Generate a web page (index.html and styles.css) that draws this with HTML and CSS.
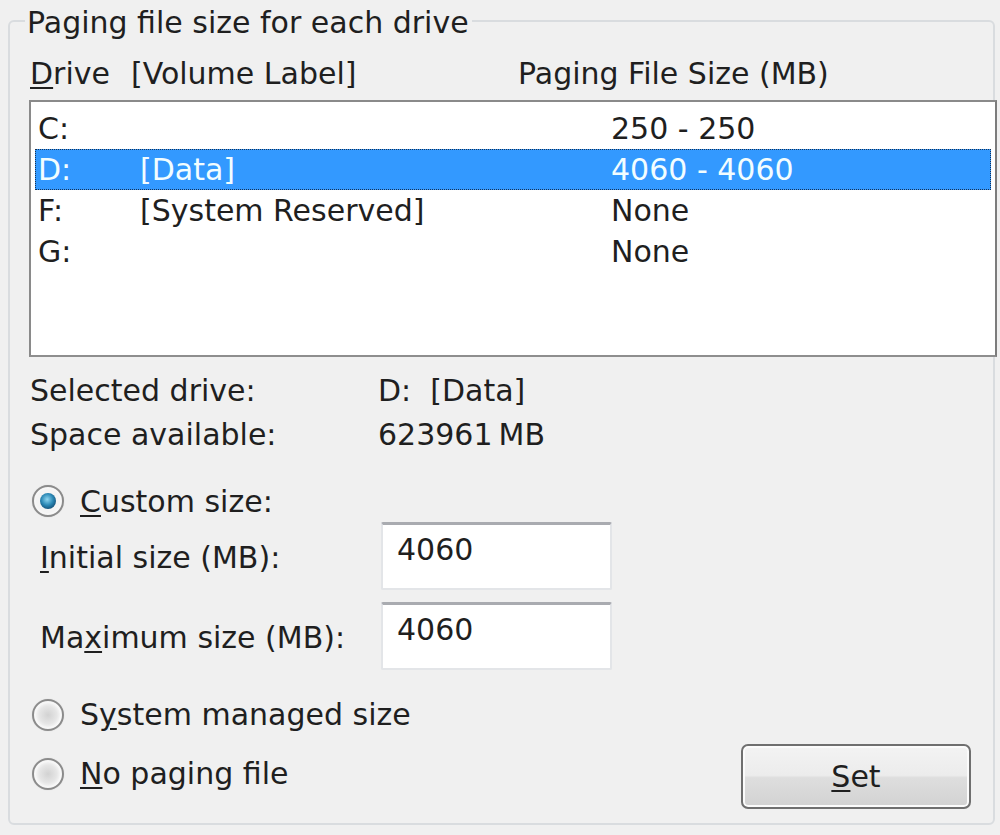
FILE: index.html
```html
<!DOCTYPE html>
<html>
<head>
<meta charset="utf-8">
<link rel="stylesheet" href="styles.css">
</head>
<body>
<fieldset class="group">
  <legend class="group-title">Paging file size for each drive</legend>
  <div class="col-head">
    <span class="ch-drive"><u>D</u>rive</span>
    <span class="ch-label">[Volume Label]</span>
    <span class="ch-size">Paging File Size (MB)</span>
  </div>
  <div class="listbox">
    <div class="row"><span class="r-drive">C:</span><span class="r-label"></span><span class="r-size">250 - 250</span></div>
    <div class="row sel"><span class="r-drive">D:</span><span class="r-label">[Data]</span><span class="r-size">4060 - 4060</span></div>
    <div class="row"><span class="r-drive">F:</span><span class="r-label">[System Reserved]</span><span class="r-size">None</span></div>
    <div class="row"><span class="r-drive">G:</span><span class="r-label"></span><span class="r-size">None</span></div>
  </div>
  <div class="info">
    <span class="info-k">Selected drive:</span><span class="info-v">D:&nbsp;&nbsp;[Data]</span>
    <span class="info-k">Space available:</span><span class="info-v">623961&#8201;MB</span>
  </div>
  <div class="radio-row custom">
    <span class="radio on"></span><span class="radio-text"><u>C</u>ustom size:</span>
  </div>
  <div class="fields">
    <div class="field"><span class="field-label"><u>I</u>nitial size (MB):</span><div class="textbox">4060</div></div>
    <div class="field"><span class="field-label">Ma<u>x</u>imum size (MB):</span><div class="textbox">4060</div></div>
  </div>
  <div class="bottom">
    <div class="radios">
      <div class="radio-row"><span class="radio"></span><span class="radio-text">S<u>y</u>stem managed size</span></div>
      <div class="radio-row"><span class="radio"></span><span class="radio-text"><u>N</u>o paging file</span></div>
    </div>
    <button class="btn" type="button"><u>S</u>et</button>
  </div>
</fieldset>
</body>
</html>
```
FILE: styles.css
```css
html, body {
  margin: 0;
  padding: 0;
  background: #f0f0f0;
}
body {
  width: 1000px;
  height: 835px;
  overflow: hidden;
  font-family: "DejaVu Sans", sans-serif;
  font-size: 30px;
  color: #1f1f1f;
}
u {
  text-decoration-thickness: 2px;
  text-underline-offset: 3px;
}
.group {
  margin: 2px 5px 0 8px;
  border: 2px solid #d9dcdf;
  border-radius: 6px;
  padding: 0 0 14px 19px;
  min-inline-size: 0;
}
.group-title {
  margin-left: -4px;
  padding: 4px 3px 0 2px;
  line-height: 34px;
}
.col-head {
  display: flex;
  margin-top: 17px;
  padding-left: 1px;
  line-height: 34px;
  white-space: nowrap;
}
.ch-drive { width: 101px; }
.ch-label { width: 387px; }
.listbox {
  margin-top: 9px;
  margin-right: -4px;
  height: 247px;
  background: #fff;
  border: 2px solid #8a8a8a;
  border-right-color: #7c7c7c;
  border-bottom-color: #8e8e8e;
  padding: 6px 4px 0 4px;
}
.row {
  display: flex;
  height: 41px;
  line-height: 41px;
  padding-left: 3px;
  white-space: nowrap;
}
.row.sel {
  background: #3399ff;
  color: #f2fdff;
  outline: 1px dotted #173152;
  outline-offset: -1px;
}
.r-drive { width: 102px; }
.r-label { width: 471px; }
.info {
  display: grid;
  grid-template-columns: 348px auto;
  margin-top: 12px;
  padding-left: 1px;
  line-height: 44px;
}
.radio-row {
  display: flex;
  align-items: center;
  height: 59px;
  padding-left: 3px;
  white-space: nowrap;
}
.radio-row.custom {
  height: 36px;
  margin-top: 26px;
}
.radio-text { margin-left: 16px; }
.radio {
  position: relative;
  flex: none;
  width: 28px;
  height: 28px;
  border-radius: 50%;
  border: 2px solid #8b8b8b;
  background: radial-gradient(circle at 50% 50%, #d2d2d2 0, #e6e6e6 45%, #fbfbfb 70%, #f4f4f4 100%);
  box-shadow: inset 0 0 0 2px #f7f7f7, 0 0 1px #c8c8c8;
}
.radio.on {
  background: #f4f4f4;
}
.radio.on::after {
  content: "";
  position: absolute;
  left: 6px;
  top: 6px;
  width: 16px;
  height: 16px;
  border-radius: 50%;
  background: radial-gradient(circle at 45% 40%, #8fd6f0 0, #2b88b5 45%, #124b72 80%, #0c3456 100%);
}
.fields {
  display: flex;
  flex-direction: column;
  gap: 12px;
  margin-top: 3px;
  padding-left: 11px;
}
.field {
  display: flex;
  align-items: center;
  height: 68px;
}
.field-label {
  width: 341px;
  padding-top: 2px;
  white-space: nowrap;
}
.textbox {
  box-sizing: border-box;
  width: 231px;
  height: 68px;
  background: #fff;
  border: 2px solid #e3e5e8;
  border-top: 3px solid #a9abb0;
  border-radius: 2px;
  padding: 8px 0 0 14px;
  line-height: 34px;
}
.bottom {
  display: flex;
  justify-content: space-between;
  align-items: flex-start;
  margin-top: 15px;
}
.btn {
  margin-top: 59px;
  margin-right: 22px;
  width: 230px;
  height: 65px;
  font: inherit;
  color: #1f1f1f;
  border: 2px solid #6f6f6f;
  border-radius: 7px;
  background: linear-gradient(#f3f3f3 0%, #ececec 48%, #dedede 52%, #d2d2d2 100%);
  box-shadow: inset 0 0 0 2px #fbfbfb;
  padding: 0;
  line-height: 34px;
}
```
